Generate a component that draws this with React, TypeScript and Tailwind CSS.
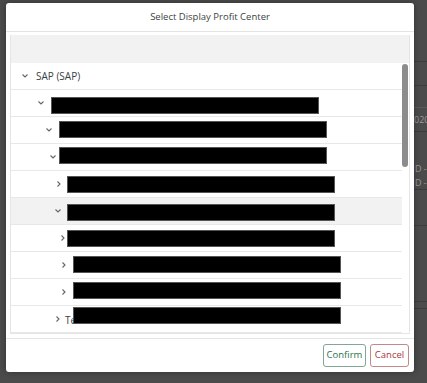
import React from "react";

type Row = {
  chev: "down" | "right";
  cx: number;
  bx: number;
  bw: number;
  bt: number;
  bh: number;
  hl?: boolean;
  text?: string;
};

const rows: Row[] = [
  { chev: "down", cx: 26, bx: 40, bw: 268, bt: 7, bh: 17 },
  { chev: "down", cx: 34, bx: 48, bw: 268, bt: 4, bh: 17 },
  { chev: "down", cx: 38, bx: 48, bw: 268, bt: 3, bh: 17 },
  { chev: "right", cx: 44, bx: 56, bw: 268, bt: 5, bh: 17 },
  { chev: "down", cx: 43, bx: 56, bw: 268, bt: 6, bh: 17, hl: true },
  { chev: "right", cx: 48, bx: 56, bw: 268, bt: 5, bh: 17 },
  { chev: "right", cx: 49, bx: 62, bw: 268, bt: 4, bh: 17 },
  { chev: "right", cx: 49, bx: 62, bw: 268, bt: 3, bh: 17 },
  { chev: "right", cx: 43, bx: 62, bw: 268, bt: 1, bh: 17, text: "Te" },
];

function Chevron({ dir }: { dir: "down" | "right" }) {
  return (
    <svg width="8" height="8" viewBox="0 0 8 8" className="shrink-0">
      {dir === "down" ? (
        <polyline points="1.5,2.5 4,5 6.5,2.5" fill="none" stroke="#666" strokeWidth="1.1" />
      ) : (
        <polyline points="2.5,1.5 5,4 2.5,6.5" fill="none" stroke="#666" strokeWidth="1.1" />
      )}
    </svg>
  );
}

export default function App() {
  return (
    <div
      className="relative w-[427px] h-[383px] overflow-hidden bg-[#4b4b4b]"
      style={{ fontFamily: '"Open Sans", "Noto Sans", Arial, sans-serif' }}
    >
      {/* background page content (right edge) */}
      <div className="ml-[414px] flex flex-col text-[9px] text-[#9a9a9a] whitespace-nowrap">
        <div className="h-[62px] border-b border-[#3c3c3c]" />
        <div className="h-[24px] border-b border-[#3c3c3c]" />
        <div className="h-[22px] border-b border-[#5a5a5a]" />
        <div className="h-[24px] leading-[24px] border-b border-[#3c3c3c]">020</div>
        <div className="h-[30px]" />
        <div className="h-[14px] leading-[14px] pl-[1px]">D -</div>
        <div className="h-[14px] leading-[14px] pl-[1px] border-b border-[#3c3c3c]">D -</div>
        <div className="h-[36px] border-b border-[#3c3c3c]" />
        <div className="h-[76px] border-b border-[#3c3c3c]" />
        <div className="h-[7px] border-b border-[#3c3c3c]" />
      </div>

      {/* dialog */}
      <div className="absolute left-[6px] top-[3px] w-[408px] h-[369px] bg-white rounded-[3px] shadow-[0_0_6px_rgba(0,0,0,0.35)] flex flex-col">
        <div className="h-[29px] shrink-0 flex items-center justify-center text-[9.5px] text-[#3b3f43] border-b border-[#e4e4e4]">
          Select Display Profit Center
        </div>
        <div className="px-[4px] pt-[3px] pb-[4px] shrink-0">
          <div className="border border-[#e5e5e5] border-t-0 flex flex-col">
            <div className="h-[28px] bg-[#f2f2f2]" />
            <div className="flex">
              <div className="flex-1 flex flex-col">
                <div className="h-[27px] flex items-center border-b border-[#e8e8e8] pl-[10px] gap-[7px] text-[10px] text-[#3b3f43]">
                  <Chevron dir="down" />
                  <span>SAP (SAP)</span>
                </div>
                {rows.map((r, i) => (
                  <div
                    key={i}
                    className={`relative h-[27px] border-b border-[#e8e8e8] ${r.hl ? "bg-[#f2f2f2]" : ""}`}
                  >
                    <div className="absolute top-[9px]" style={{ left: r.cx }}>
                      <Chevron dir={r.chev} />
                    </div>
                    {r.text && (
                      <span className="absolute top-[7px] text-[10px] text-[#3b3f43]" style={{ left: r.cx + 11 }}>
                        {r.text}
                      </span>
                    )}
                    <div
                      className="absolute bg-black border border-[#555]"
                      style={{ left: r.bx, width: r.bw, top: r.bt, height: r.bh }}
                    />
                  </div>
                ))}
              </div>
              <div className="w-[7px] shrink-0 pt-[1px]">
                <div className="w-[6px] h-[103px] rounded-[3px] bg-[#8c8c8c]" />
              </div>
            </div>
          </div>
        </div>
        <div className="flex-1 border-t border-[#e4e4e4] flex items-center justify-end gap-[4px] pr-[5px] pb-[1px]">
          <button className="h-[23px] w-[43px] rounded-[3px] border border-[#7fa792] text-[9.5px] text-[#2a7449] bg-white">
            Confirm
          </button>
          <button className="h-[23px] w-[39px] rounded-[3px] border border-[#c08a8a] text-[9.5px] text-[#a8373b] bg-white">
            Cancel
          </button>
        </div>
      </div>
    </div>
  );
}
